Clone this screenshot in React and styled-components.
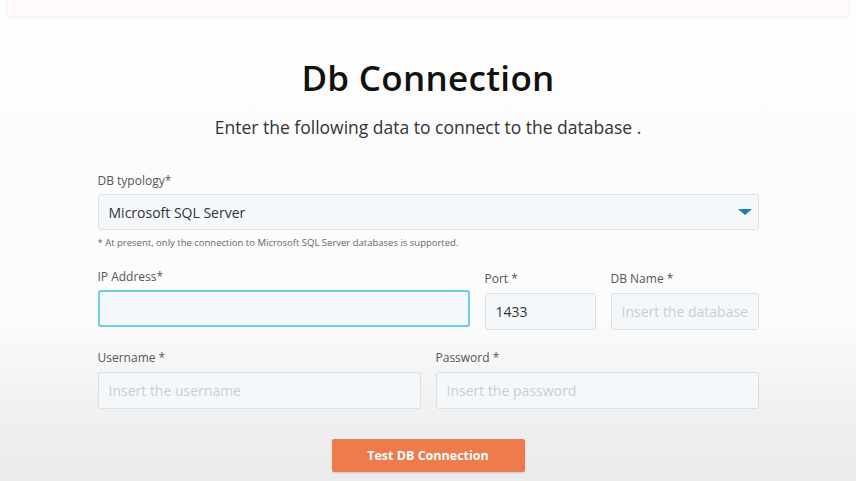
import React from 'react';
import styled, { createGlobalStyle } from 'styled-components';

const Global = createGlobalStyle`
  html, body { margin: 0; padding: 0; }
  body {
    font-family: "Open Sans", "Noto Sans", sans-serif;
    background: linear-gradient(to bottom, #fdfdfd 0%, #fcfcfc 65%, #efefef 88%, #ebebeb 100%);
    min-height: 481px;
    overflow: hidden;
  }
`

const Page = styled.div`
  width: 856px;
  height: 481px;
  display: flex;
  flex-direction: column;
  align-items: center;
`

const TopBar = styled.div`
  align-self: stretch;
  height: 16px;
  margin: 0 8px;
  background: #fff8fc;
  box-shadow: 0 1px 3px rgba(240, 225, 235, 0.6);
`

const Title = styled.h1`
  margin: 42px 0 0;
  font-size: 35px;
  font-weight: 600;
  color: #111;
  letter-spacing: 0.3px;
  line-height: 40px;
`

const Subtitle = styled.p`
  margin: 17px 0 0;
  font-size: 17.5px;
  color: #333;
  line-height: 24px;
`

const Form = styled.div`
  width: 661px;
  margin-top: 34px;
  display: flex;
  flex-direction: column;
`

const Label = styled.label`
  display: block;
  font-size: 12px;
  color: #555;
  line-height: 16px;
  margin-bottom: ${p => p.$gap || 5}px;
`

const Field = styled.div`
  display: flex;
  flex-direction: column;
  padding-top: ${p => p.$top || 0}px;
`

const Select = styled.div`
  height: 36px;
  box-sizing: border-box;
  border: 1px solid #d9e0e6;
  border-radius: 3px;
  background: #f5f8fb;
  display: flex;
  align-items: center;
  justify-content: space-between;
  padding: 0 6px 0 10px;
  font-size: 14px;
  color: #333;
`

const Caret = styled.span`
  width: 0;
  height: 0;
  border-left: 7px solid transparent;
  border-right: 7px solid transparent;
  border-top: 6px solid #1f7fa6;
`

const Note = styled.div`
  font-size: 9.5px;
  color: #666;
  margin-top: 6px;
`

const Row = styled.div`
  display: grid;
  grid-template-columns: ${p => p.$cols};
  gap: 15px;
  margin-top: ${p => p.$mt}px;
  align-items: start;
`

const Input = styled.input`
  height: 37px;
  box-sizing: border-box;
  width: 100%;
  border: ${p => (p.$focus ? '2px solid #6ccde3' : '1px solid #d9e0e6')};
  border-radius: 3px;
  background: #f5f8fb;
  padding: 0 10px;
  font-family: inherit;
  font-size: 14px;
  color: #333;
  outline: none;
  &::placeholder { color: #c9ced3; }
`

const Bottom = styled.div`
  display: flex;
  justify-content: center;
  margin-top: 30px;
`

const Button = styled.button`
  width: 193px;
  height: 33px;
  border: none;
  border-radius: 2px;
  background: #ed7b4c;
  color: #fff;
  font-family: inherit;
  font-weight: 700;
  font-size: 12.5px;
  box-shadow: 0 1px 2px rgba(0, 0, 0, 0.15);
`

export default function App() {
  return (
    <Page>
      <Global />
      <TopBar />
      <Title>Db Connection</Title>
      <Subtitle>Enter the following data to connect to the database .</Subtitle>
      <Form>
        <Label>DB typology*</Label>
        <Select>
          <span>Microsoft SQL Server</span>
          <Caret />
        </Select>
        <Note>* At present, only the connection to Microsoft SQL Server databases is supported.</Note>
        <Row $cols="372px 111px 1fr" $mt={20}>
          <Field>
            <Label $gap={5}>IP Address*</Label>
            <Input $focus />
          </Field>
          <Field $top={2}>
            <Label $gap={6}>Port *</Label>
            <Input defaultValue="1433" />
          </Field>
          <Field $top={2}>
            <Label $gap={6}>DB Name *</Label>
            <Input placeholder="Insert the database" />
          </Field>
        </Row>
        <Row $cols="1fr 1fr" $mt={20}>
          <Field>
            <Label $gap={6}>Username *</Label>
            <Input placeholder="Insert the username" />
          </Field>
          <Field>
            <Label $gap={6}>Password *</Label>
            <Input placeholder="Insert the password" />
          </Field>
        </Row>
        <Bottom>
          <Button>Test DB Connection</Button>
        </Bottom>
      </Form>
    </Page>
  );
}
